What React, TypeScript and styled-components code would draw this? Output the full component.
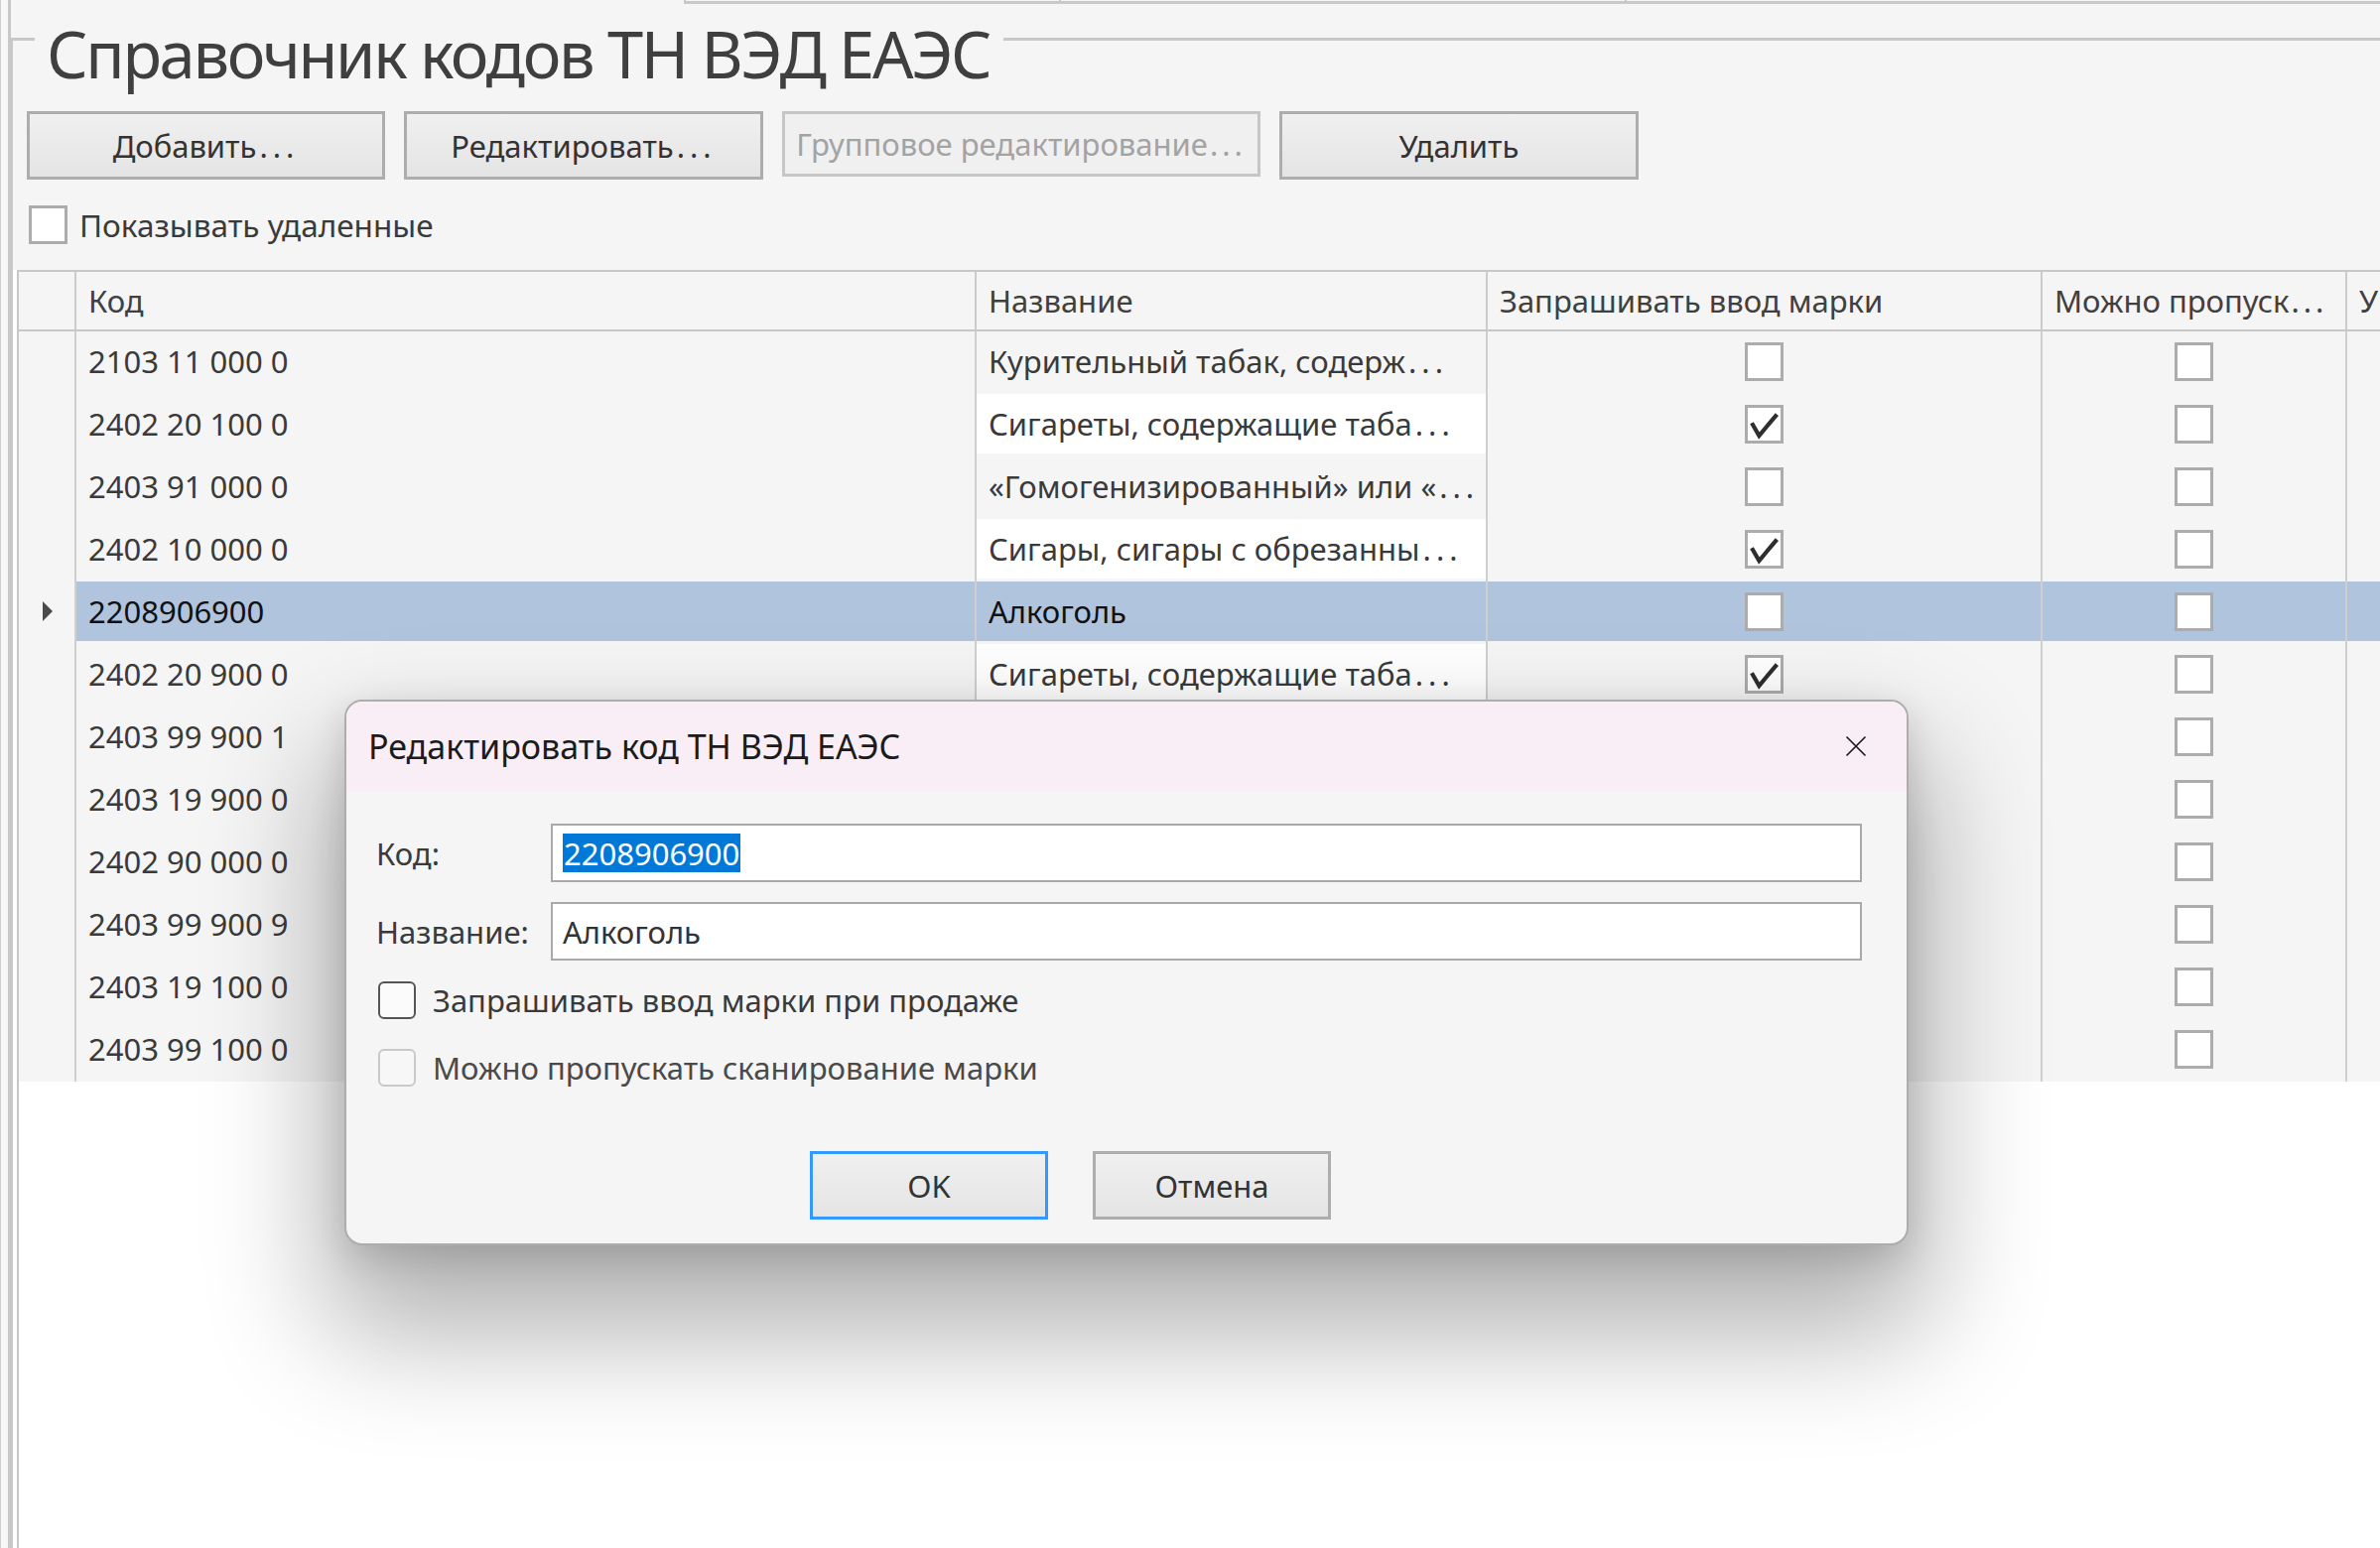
import React from "react";
import styled, { createGlobalStyle } from "styled-components";

const FONT = `"Noto Sans", "Open Sans", "DejaVu Sans", sans-serif`;

const GlobalStyle = createGlobalStyle`
  html, body { margin: 0; padding: 0; }
  body { font-family: ${FONT}; background: #ffffff; color: #3a3a3a; }
  * { box-sizing: border-box; }
`;

const Screen = styled.div`
  position: relative;
  width: 2398px;
  height: 1560px;
  overflow: hidden;
  display: flex;
  background: #ffffff;
  border-left: 1px solid #cfcfcf;
`;

const OuterStrip = styled.div`
  width: 7px;
  flex: none;
  background: #f7f7f7;
`;

const Main = styled.div`
  flex: 1;
  min-width: 0;
  display: flex;
  flex-direction: column;
  border-left: 3px solid #c8c8c8;
`;

const TabStubs = styled.div`
  display: flex;
  height: 4px;
  padding-left: 678px;
  background: #f5f5f5;
`;

const TabStub = styled.div<{ $w?: number }>`
  ${(p) => (p.$w ? `width: ${p.$w}px;` : "flex: 1;")}
  height: 4px;
  border-left: 2px solid #c8c8c8;
  border-bottom: 3px solid #c8c8c8;
`;

const GroupHeader = styled.div`
  display: flex;
  background: #f5f5f5;
`;

const GroupEdgeLeft = styled.div`
  width: 24px;
  flex: none;
  margin-top: 34px;
  border-top: 3px solid #c8c8c8;
  border-left: 2px solid #c8c8c8;
`;

const GroupEdgeRight = styled.div`
  flex: 1;
  margin-top: 34px;
  border-top: 3px solid #c8c8c8;
`;

const GroupTitle = styled.h1`
  margin: 6px 14px 0 12px;
  font-family: ${FONT};
  font-weight: 400;
  font-size: 65px;
  letter-spacing: -2.3px;
  line-height: normal;
  color: #3f3f3f;
  white-space: nowrap;
`;

const GroupBody = styled.div`
  flex: 1;
  display: flex;
  flex-direction: column;
  border-left: 2px solid #c8c8c8;
`;

const Toolbar = styled.div`
  display: flex;
  gap: 19px;
  padding: 14px 0 0 14px;
  background: #f5f5f5;
`;

const Button = styled.button<{ $w: number; $primary?: boolean }>`
  width: ${(p) => p.$w}px;
  height: 69px;
  padding: 0;
  font-family: ${FONT};
  font-size: 31px;
  color: #333333;
  background: linear-gradient(#f0f0f0, #e4e4e4);
  border: 3px solid ${(p) => (p.$primary ? "#3399ff" : "#adadad")};
  white-space: nowrap;
  overflow: hidden;
  cursor: default;
  &:disabled {
    color: #a3a3a3;
    border-color: #c6c6c6;
    background: #f0f0f0;
    height: 66px;
  }
`;

const Dots = styled.span<{ $sp: number }>`
  letter-spacing: ${(p) => p.$sp}px;
  margin-left: ${(p) => Math.round(p.$sp / 2)}px;
`;

const OptionsRow = styled.div`
  display: flex;
  align-items: center;
  gap: 12px;
  height: 91px;
  padding: 0 0 0 16px;
  background: #f5f5f5;
`;

const Box = styled.span`
  width: 39px;
  height: 39px;
  flex: none;
  display: inline-flex;
  background: #ffffff;
  border: 3px solid #acacac;
`;

const OptionLabel = styled.span`
  font-size: 31.5px;
  color: #3a3a3a;
  white-space: nowrap;
`;

const TableArea = styled.div`
  flex: 1;
  display: flex;
  padding-left: 4px;
  background: #ffffff;
`;

const TableFrame = styled.div`
  flex: 1;
  min-width: 0;
  border-left: 2px solid #c8c8c8;
  background: #ffffff;
`;

const Grid = styled.div`
  display: grid;
  grid-template-columns: 58px 907px 515px 559px 307px 1fr;
  border-top: 2px solid #c8c8c8;
  background: #f5f5f5;
`;

const HeadCell = styled.div<{ $last?: boolean }>`
  height: 60px;
  display: flex;
  align-items: center;
  padding-left: 12px;
  border-right: ${(p) => (p.$last ? "none" : "2px solid #cbcbcb")};
  border-bottom: 2px solid #c8c8c8;
  font-size: 31px;
  color: #404040;
  white-space: nowrap;
  overflow: hidden;
`;

const Cell = styled.div<{ $bg: string; $center?: boolean; $last?: boolean }>`
  height: 63px;
  padding: 0 0 3px 12px;
  display: flex;
  align-items: center;
  justify-content: ${(p) => (p.$center ? "center" : "flex-start")};
  ${(p) => (p.$center ? "padding-left: 0;" : "")}
  background: linear-gradient(to bottom, ${(p) => p.$bg} 60px, #f5f5f5 60px);
  border-right: ${(p) => (p.$last ? "none" : "2px solid #cfcfcf")};
  font-size: 31px;
  color: #3a3a3a;
  white-space: nowrap;
  overflow: hidden;
`;

const RowHeadCell = styled.div`
  height: 63px;
  padding-bottom: 3px;
  display: flex;
  align-items: center;
  justify-content: center;
  padding-left: 2px;
  border-right: 2px solid #cfcfcf;
  background: #f5f5f5;
`;

const SelText = styled.span`
  color: #111111;
`;

/* Dialog */

const Dialog = styled.div`
  position: absolute;
  left: 346px;
  top: 705px;
  width: 1576px;
  height: 550px;
  display: flex;
  flex-direction: column;
  background: #f5f5f5;
  border: 2px solid #adadad;
  border-radius: 18px;
  overflow: hidden;
  box-shadow: 0 70px 120px 20px rgba(0, 0, 0, 0.3), 0 12px 36px rgba(0, 0, 0, 0.14);
`;

const DialogTitleBar = styled.div`
  height: 90px;
  flex: none;
  display: flex;
  align-items: center;
  justify-content: space-between;
  padding: 0 40px 0 22px;
  background: #f9eef6;
`;

const DialogTitle = styled.span`
  font-size: 34px;
  color: #1b1b1b;
  white-space: nowrap;
`;

const CloseBtn = styled.span`
  width: 22px;
  height: 22px;
  display: inline-flex;
`;

const DialogBody = styled.div`
  display: flex;
  flex-direction: column;
  padding: 33px 45px 0 30px;
`;

const FieldRow = styled.div`
  display: flex;
  align-items: center;
  height: 59px;
  & + & {
    margin-top: 20px;
  }
`;

const FieldLabel = styled.span`
  width: 176px;
  flex: none;
  font-size: 31px;
  color: #3a3a3a;
  white-space: nowrap;
`;

const TextBox = styled.div`
  flex: 1;
  height: 59px;
  display: flex;
  align-items: center;
  padding-left: 10px;
  background: #ffffff;
  border: 2px solid #a9a9a9;
  font-size: 31px;
  color: #333333;
`;

const Selection = styled.span`
  display: inline-flex;
  align-items: center;
  height: 39px;
  padding: 0 1px;
  background: #0078d7;
  color: #ffffff;
`;

const CheckRow = styled.div<{ $gap: number }>`
  display: flex;
  align-items: center;
  gap: 17px;
  margin-top: ${(p) => p.$gap}px;
  padding-left: 2px;
`;

const RoundBox = styled.span<{ $disabled?: boolean }>`
  width: 38px;
  height: 38px;
  flex: none;
  border-radius: 6px;
  border: 2.5px solid ${(p) => (p.$disabled ? "#c9c9c9" : "#555555")};
  background: ${(p) => (p.$disabled ? "#f7f7f7" : "#fbfbfb")};
`;

const CheckLabel = styled.span<{ $disabled?: boolean }>`
  font-size: 31px;
  color: ${(p) => (p.$disabled ? "#4a4a4a" : "#3a3a3a")};
  white-space: nowrap;
`;

const DialogButtons = styled.div`
  display: flex;
  gap: 45px;
  margin-top: 63px;
  padding-left: 437px;
`;

const CheckMark = () => (
  <svg width="100%" height="100%" viewBox="0 0 33 33">
    <path d="M4 15.2 L11.4 28 L29.4 6.6" fill="none" stroke="#2e2e2e" strokeWidth="4.2" strokeLinejoin="miter" strokeLinecap="butt" />
  </svg>
);

const CheckCell: React.FC<{ checked: boolean }> = ({ checked }) => (
  <Box>{checked ? <CheckMark /> : null}</Box>
);

const RowArrow = () => (
  <svg width="12" height="22" viewBox="0 0 12 22">
    <polygon points="1,1 11,11 1,21" fill="#4a4a4a" />
  </svg>
);

const CloseIcon = () => (
  <svg width="22" height="22" viewBox="0 0 22 22">
    <path d="M1.5 1.5 L20.5 20.5 M20.5 1.5 L1.5 20.5" stroke="#1c1c1c" strokeWidth="1.7" fill="none" />
  </svg>
);

type Row = { code: string; name: string; cut: boolean; ask: boolean; skip: boolean };

const rows: Row[] = [
  { code: "2103 11 000 0", name: "Курительный табак, содерж", cut: true, ask: false, skip: false },
  { code: "2402 20 100 0", name: "Сигареты, содержащие таба", cut: true, ask: true, skip: false },
  { code: "2403 91 000 0", name: "«Гомогенизированный» или «", cut: true, ask: false, skip: false },
  { code: "2402 10 000 0", name: "Сигары, сигары с обрезанны", cut: true, ask: true, skip: false },
  { code: "2208906900", name: "Алкоголь", cut: false, ask: false, skip: false },
  { code: "2402 20 900 0", name: "Сигареты, содержащие таба", cut: true, ask: true, skip: false },
  { code: "2403 99 900 1", name: "Жевательный и нюхательный", cut: true, ask: false, skip: false },
  { code: "2403 19 900 0", name: "Прочий табак для курения", cut: true, ask: false, skip: false },
  { code: "2402 90 000 0", name: "Прочие сигары и сигареты", cut: true, ask: false, skip: false },
  { code: "2403 99 900 9", name: "Прочий табак и табачные", cut: true, ask: false, skip: false },
  { code: "2403 19 100 0", name: "Табак в первичных упаковк", cut: true, ask: false, skip: false },
  { code: "2403 99 100 0", name: "Жевательный табак", cut: true, ask: false, skip: false },
];

const SELECTED = 4;

export default function App() {
  return (
    <>
      <GlobalStyle />
      <Screen>
        <OuterStrip />
        <Main>
          <TabStubs>
            <TabStub $w={378} />
            <TabStub $w={570} />
            <TabStub />
          </TabStubs>
          <GroupHeader>
            <GroupEdgeLeft />
            <GroupTitle>Справочник кодов ТН ВЭД ЕАЭС</GroupTitle>
            <GroupEdgeRight />
          </GroupHeader>
          <GroupBody>
            <Toolbar>
              <Button $w={361}>
                Добавить<Dots $sp={5}>...</Dots>
              </Button>
              <Button $w={362}>
                Редактировать<Dots $sp={5}>...</Dots>
              </Button>
              <Button $w={482} disabled>
                Групповое редактирование<Dots $sp={4}>...</Dots>
              </Button>
              <Button $w={362}>Удалить</Button>
            </Toolbar>
            <OptionsRow>
              <Box />
              <OptionLabel>Показывать удаленные</OptionLabel>
            </OptionsRow>
            <TableArea>
              <TableFrame>
                <Grid>
                  <HeadCell />
                  <HeadCell>Код</HeadCell>
                  <HeadCell>Название</HeadCell>
                  <HeadCell>Запрашивать ввод марки</HeadCell>
                  <HeadCell>
                    Можно пропуск<Dots $sp={4}>...</Dots>
                  </HeadCell>
                  <HeadCell $last>У</HeadCell>
                  {rows.map((r, i) => {
                    const sel = i === SELECTED;
                    const base = sel ? "#b0c4de" : "#f5f5f5";
                    const nameBg = sel ? "#b0c4de" : i % 2 === 1 ? "#ffffff" : "#f5f5f5";
                    const name = (
                      <>
                        {r.name}
                        {r.cut ? <Dots $sp={5}>...</Dots> : null}
                      </>
                    );
                    return (
                      <React.Fragment key={i}>
                        <RowHeadCell>{sel ? <RowArrow /> : null}</RowHeadCell>
                        <Cell $bg={base}>{sel ? <SelText>{r.code}</SelText> : r.code}</Cell>
                        <Cell $bg={nameBg}>{sel ? <SelText>{name}</SelText> : name}</Cell>
                        <Cell $bg={base} $center>
                          <CheckCell checked={r.ask} />
                        </Cell>
                        <Cell $bg={base} $center>
                          <CheckCell checked={r.skip} />
                        </Cell>
                        <Cell $bg={base} $last />
                      </React.Fragment>
                    );
                  })}
                </Grid>
              </TableFrame>
            </TableArea>
          </GroupBody>
        </Main>

        <Dialog role="dialog" aria-label="Редактировать код ТН ВЭД ЕАЭС">
          <DialogTitleBar>
            <DialogTitle>Редактировать код ТН ВЭД ЕАЭС</DialogTitle>
            <CloseBtn>
              <CloseIcon />
            </CloseBtn>
          </DialogTitleBar>
          <DialogBody>
            <FieldRow>
              <FieldLabel>Код:</FieldLabel>
              <TextBox>
                <Selection>2208906900</Selection>
              </TextBox>
            </FieldRow>
            <FieldRow>
              <FieldLabel>Название:</FieldLabel>
              <TextBox>Алкоголь</TextBox>
            </FieldRow>
            <CheckRow $gap={19}>
              <RoundBox />
              <CheckLabel>Запрашивать ввод марки при продаже</CheckLabel>
            </CheckRow>
            <CheckRow $gap={26}>
              <RoundBox $disabled />
              <CheckLabel $disabled>Можно пропускать сканирование марки</CheckLabel>
            </CheckRow>
            <DialogButtons>
              <Button $w={240} $primary>
                OK
              </Button>
              <Button $w={240}>Отмена</Button>
            </DialogButtons>
          </DialogBody>
        </Dialog>
      </Screen>
    </>
  );
}
